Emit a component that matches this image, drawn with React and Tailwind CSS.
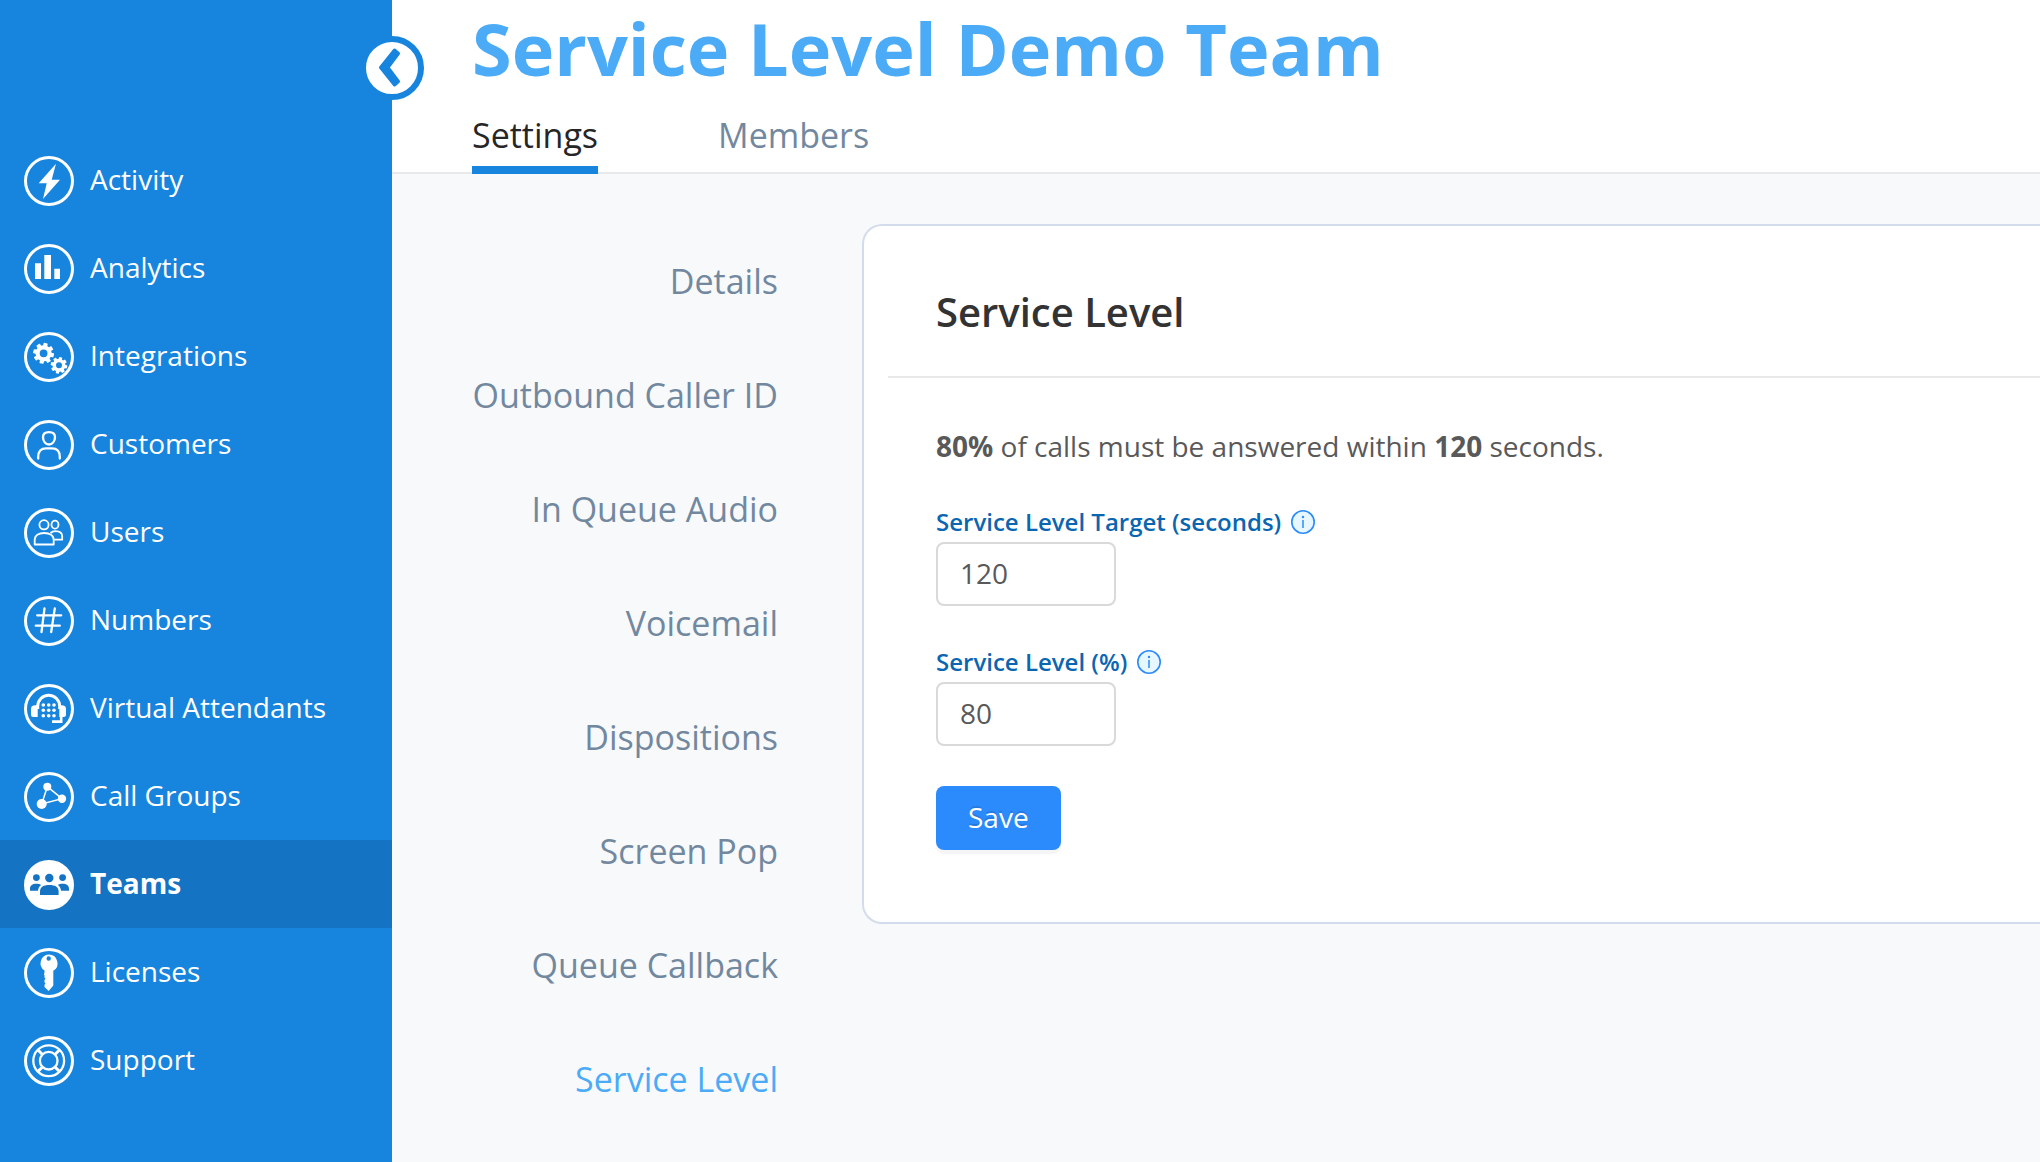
import { useState } from 'react';

const GEAR_TEETH = [0, 45, 90, 135, 180, 225, 270, 315];
const DIAL_X = [19.3, 24.7, 30];
const DIAL_Y = [21, 26.3, 31.7];

function Gear({ cx, cy, r, hole }) {
  const ring = r * 0.78 - hole;
  return (
    <g>
      <circle cx={cx} cy={cy} r={hole + ring / 2} fill="none" stroke="currentColor" strokeWidth={ring} />
      {GEAR_TEETH.map(a => (
        <rect key={a} x={cx - r * 0.2} y={cy - r} width={r * 0.4} height={r * 0.4} rx="0.6"
          fill="currentColor" transform={`rotate(${a + 12} ${cx} ${cy})`} />
      ))}
    </g>
  );
}

const ICONS = {
  activity: <path d="M32 7.7 14.7 27.3h8L19 43 36 23.7h-8.3z" fill="currentColor" />,
  analytics: <path d="M11 19.3h6V35h-6zM20.3 11H27v24h-6.7zM30.3 24.7H36V35h-5.7z" fill="currentColor" />,
  integrations: (
    <>
      <Gear cx={19.6} cy={21.3} r={10.4} hole={3.9} />
      <Gear cx={35} cy={33.3} r={8.3} hole={3} />
    </>
  ),
  customers: (
    <g fill="none" stroke="currentColor" strokeWidth="2.3" strokeLinecap="round">
      <path d="M25 12.2c3.8 0 6 1.6 6 5 0 4-2.6 7.3-6 7.3s-6-3.3-6-7.3c0-3.4 2.2-5 6-5z" />
      <path d="M14.2 38.5V37c0-6 2.8-8.6 7.8-8.6h6c5 0 7.8 2.6 7.8 8.6v1.5" />
    </g>
  ),
  users: (
    <g fill="none" stroke="currentColor" strokeWidth="1.8" strokeLinejoin="round">
      <circle cx="20" cy="16.8" r="4.6" />
      <ellipse cx="31" cy="16.7" rx="3.5" ry="4" />
      <path d="M10.7 36.5v-4.5c0-4.5 4-7 9.500-7s9.500 2.500 9.500 7v4.500z" />
      <path d="M26.500 25c1.500-1.500 3-1.900 5-1.900 4 0 6.700 1.900 6.700 5.400v3.200h-8" />
    </g>
  ),
  numbers: (
    <path d="M20.5 12.3 17.5 36M30.8 12.3 27.2 36M13.2 19.3h24M11.8 29.7h24"
      fill="none" stroke="currentColor" strokeWidth="2.3" strokeLinecap="round" />
  ),
  attendants: (
    <>
      <path d="M13.7 25v-2.500a11 11.300 0 0 1 22 0V25" fill="none" stroke="currentColor" strokeWidth="3" />
      <path d="M13.7 21v12H9.500q-2.500 0-2.500-2.500v-6Q7 22 9.500 21.500zM35.3 21v12h4.200q2.500 0 2.500-2.500v-6q0-2.500-2.500-3z" fill="currentColor" />
      <path d="M37.2 32v5.600H28" fill="none" stroke="currentColor" strokeWidth="2.6" />
      {DIAL_Y.map(y => DIAL_X.map(x => <circle key={`${x}-${y}`} cx={x} cy={y} r="1.8" fill="currentColor" />))}
    </>
  ),
  groups: (
    <>
      <path d="M23.3 14.7 38 26.7 17.7 32z" fill="none" stroke="currentColor" strokeWidth="1.5" />
      <circle cx="23.3" cy="14.7" r="4" fill="currentColor" />
      <circle cx="38" cy="26.7" r="4.2" fill="currentColor" />
      <circle cx="17.7" cy="32" r="5" fill="currentColor" />
    </>
  ),
  teams: (
    <g fill="#1473c3">
      <circle cx="12.4" cy="17.6" r="3.4" />
      <circle cx="38.6" cy="17.6" r="3.4" />
      <circle cx="25.3" cy="18" r="4.2" />
      <path d="M6 30.7v-2c0-3.500 2.500-5 6.300-5 2 0 3.700.3 4.900 1.200-1.900 1.300-3 3.200-3.200 5.800z" />
      <path d="M45 30.7v-2c0-3.500-2.500-5-6.300-5-2 0-3.700.3-4.900 1.200 1.900 1.300 3 3.200 3.200 5.800z" />
      <path d="M16 35v-3.500c0-4.500 3.500-6.500 9.300-6.500s9.300 2 9.300 6.500V35z" />
    </g>
  ),
  licenses: (
    <path fillRule="evenodd" fill="currentColor"
      d="M24.7 6.5a8.8 8.8 0 0 1 4.600 16.300V37.500L24.700 43l-4.200-4v-2.300l1-1.200-1-1.200V32l1-1.200-1-1.200v-2.300l-.6-1.200.6-1.200v-2.300A8.800 8.800 0 0 1 24.700 6.500zm0 1.800a2.200 2.200 0 1 0 0 4.400 2.200 2.200 0 0 0 0-4.400z" />
  ),
  support: (
    <g fill="none" stroke="currentColor" strokeWidth="2.3">
      <circle cx="24.7" cy="24.7" r="15.4" />
      <circle cx="24.7" cy="24.7" r="8.8" />
      <path d="M14 14l4.700 4.700M35.4 14l-4.700 4.700M14 35.4l4.700-4.700M35.4 35.4l-4.700-4.700" strokeWidth="3" />
    </g>
  ),
};

const NAV = [
  { label: 'Activity',           icon: 'activity' },
  { label: 'Analytics',          icon: 'analytics' },
  { label: 'Integrations',       icon: 'integrations' },
  { label: 'Customers',          icon: 'customers' },
  { label: 'Users',              icon: 'users' },
  { label: 'Numbers',            icon: 'numbers' },
  { label: 'Virtual Attendants', icon: 'attendants' },
  { label: 'Call Groups',        icon: 'groups' },
  { label: 'Teams',              icon: 'teams' },
  { label: 'Licenses',           icon: 'licenses' },
  { label: 'Support',            icon: 'support' },
];

const SECTIONS = [
  'Details', 'Outbound Caller ID', 'In Queue Audio', 'Voicemail',
  'Dispositions', 'Screen Pop', 'Queue Callback', 'Service Level',
];

function NavItem({ label, icon, active }) {
  return (
    <a href="#" aria-current={active ? 'page' : undefined}
      className={`flex h-[88px] items-center gap-4 pb-0.5 pl-6 text-[28px] text-white ${
        active ? 'bg-[#1473c3] font-bold' : ''
      }`}>
      <svg viewBox="0 0 50 50" className="mt-1 size-[50px] shrink-0" aria-hidden="true">
        <circle cx="25" cy="25" r="23.5" fill={active ? 'white' : 'none'} stroke="white" strokeWidth="3" />
        {ICONS[icon]}
      </svg>
      {label}
    </a>
  );
}

function InfoIcon() {
  return (
    <svg viewBox="0 0 24 24" className="size-6" aria-hidden="true">
      <circle cx="12" cy="12" r="11.2" fill="#e6f7ff" stroke="#2b8bfd" strokeWidth="1.6" />
      <path d="M12 10v8" stroke="#2b8bfd" strokeWidth="1.5" />
      <circle cx="12" cy="7" r="1.2" fill="#2b8bfd" />
    </svg>
  );
}

function Field({ id, label, value, onChange }) {
  return (
    <div className="flex flex-col">
      <div className="flex h-10 items-center gap-2.5">
        <label htmlFor={id} className="text-2xl font-semibold text-[#0b66b2]">{label}</label>
        <InfoIcon />
      </div>
      <input id={id} type="text" inputMode="numeric" value={value}
        onChange={e => onChange(e.target.value)}
        className="h-16 w-[180px] rounded-lg border-2 border-[#d9d9d9] bg-white px-[22px] pb-0.5 text-[28px] text-[#595959]" />
    </div>
  );
}

export default function App() {
  const [target,  setTarget]  = useState('120');
  const [percent, setPercent] = useState('80');

  return (
    <div className="flex min-h-screen bg-[#f8f9fb] font-['Open_Sans','Noto_Sans',sans-serif]">
      <aside className="relative w-[392px] shrink-0 bg-[#1784de] pt-[136px]">
        <nav>
          {NAV.map(item => <NavItem key={item.label} {...item} active={item.label === 'Teams'} />)}
        </nav>

        {/* Collapse toggle, straddles the sidebar edge */}
        <button type="button" aria-label="Collapse menu"
          className="absolute top-9 -right-8 flex size-16 items-center justify-center rounded-full border-[6px] border-[#1784de] bg-white text-[#1784de]">
          <svg viewBox="0 0 32 44" className="h-11 w-8" aria-hidden="true">
            <path d="M18.5 4 4.500 21.500l14 17.500 4-3.500L12 21.500 22.500 7.500z"
              fill="currentColor" stroke="currentColor" strokeWidth="3" strokeLinejoin="round" />
          </svg>
        </button>
      </aside>

      <main className="min-w-0 flex-1">
        <header className="border-b-2 border-[#e8e9eb] bg-white pl-20">
          <h1 className="text-[72px] leading-[96px] font-bold text-[#4babf7]">Service Level Demo Team</h1>
          <div className="-mb-0.5 flex h-[78px] gap-[120px] pt-3.5 text-[34px]">
            <a href="#" className="border-b-8 border-[#1784de] text-[#262626]">Settings</a>
            <a href="#" className="text-[#72889f]">Members</a>
          </div>
        </header>

        <div className="flex pt-[50px]">
          <nav className="flex w-[386px] shrink-0 flex-col text-right text-[34px]">
            {SECTIONS.map(s => (
              <a key={s} href="#"
                className={`flex h-[114px] items-center justify-end ${
                  s === 'Service Level' ? 'text-[#4babf7]' : 'text-[#72889f]'
                }`}>
                {s}
              </a>
            ))}
          </nav>

          <section className="ml-[84px] flex-1 self-start rounded-l-[20px] border-2 border-r-0 border-[#d3dcec] bg-white pb-[72px] pl-6">
            <h2 className="border-b-2 border-[#e8e8e8] pt-[58px] pb-[36px] pl-12 text-[40px] leading-[56px] font-semibold text-[#333]">
              Service Level
            </h2>
            <div className="flex flex-col items-start pl-12">
              <p className="mt-12 text-[28px] leading-[40px] text-[#595959]">
                <strong className="font-bold">{percent}%</strong> of calls must be answered within{' '}
                <strong className="font-bold">{target}</strong> seconds.
              </p>
              <div className="mt-9 flex flex-col gap-9">
                <Field id="sl-target" label="Service Level Target (seconds)" value={target} onChange={setTarget} />
                <Field id="sl-percent" label="Service Level (%)" value={percent} onChange={setPercent} />
              </div>
              <button type="button"
                className="mt-10 h-16 rounded-lg bg-[#2b8bfd] px-8 pb-0.5 text-[28px] text-white shadow-[0_4px_0_rgba(0,0,0,0.04)] [text-shadow:0_-2px_0_rgba(0,0,0,0.12)]">
                Save
              </button>
            </div>
          </section>
        </div>
      </main>
    </div>
  );
}
